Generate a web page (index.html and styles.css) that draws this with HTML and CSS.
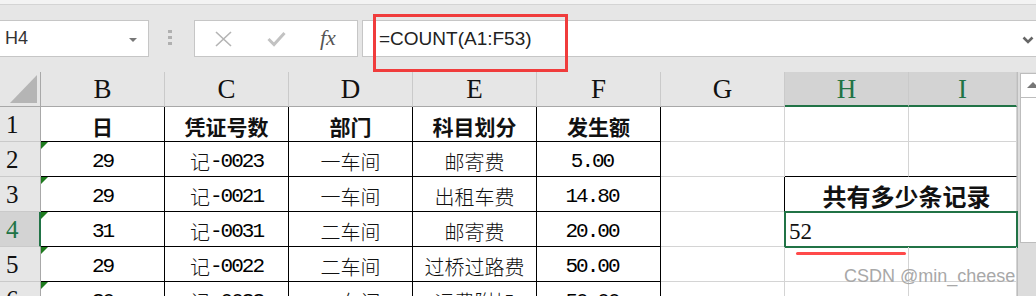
FILE: index.html
```html
<!DOCTYPE html>
<html>
<head>
	<meta charset="utf-8">
	<title>COUNT</title>
	<link rel="stylesheet" href="styles.css">
</head>
<body>
	<div class="app">
		<div class="topline"></div>
		<div class="formula-bar">
			<div class="name-box"><span>H4</span><i class="caret"></i></div>
			<div class="grip"><i></i><i></i><i></i></div>
			<div class="fx-buttons">
				<svg class="btn-x" width="19" height="16" viewBox="0 0 19 16"><path d="M2 1 L17 15 M17 1 L2 15" /></svg>
				<svg class="btn-ok" width="19" height="16" viewBox="0 0 19 16"><path d="M1.5 8 L7 13.5 L17.5 2" /></svg>
				<span class="fx">fx</span>
			</div>
			<div class="formula-input">
				<span class="formula">=COUNT(A1:F53)</span>
				<svg class="chevron" width="12" height="8" viewBox="0 0 12 8"><path d="M1.5 1.5 L6 6 L10.5 1.5" /></svg>
			</div>
		</div>

		<div class="sheet">
			<!-- header -->
			<div class="corner"><svg width="41" height="35" viewBox="0 0 41 35"><polygon points="37,3 37,31 10,31" /></svg></div>
			<div class="hd">B</div>
			<div class="hd">C</div>
			<div class="hd">D</div>
			<div class="hd">E</div>
			<div class="hd">F</div>
			<div class="hd">G</div>
			<div class="hd sel">H</div>
			<div class="hd sel">I</div>
			<div class="scroll">
				<div class="scroll-up"><i></i></div>
				<div class="scroll-thumb"></div>
			</div>

			<!-- row 1 -->
			<div class="rh">1</div>
			<div class="c t bold">日</div>
			<div class="c t bold">凭证号数</div>
			<div class="c t bold">部门</div>
			<div class="c t bold">科目划分</div>
			<div class="c t bold">发生额</div>
			<div class="c"></div>
			<div class="c"></div>
			<div class="c"></div>

			<!-- row 2 -->
			<div class="rh">2</div>
			<div class="c t flag"><span class="num">29</span></div>
			<div class="c t">记<span class="num">-0023</span></div>
			<div class="c t">一车间</div>
			<div class="c t">邮寄费</div>
			<div class="c t money"><span class="num">5.00</span></div>
			<div class="c"></div>
			<div class="c under"></div>
			<div class="c under"></div>

			<!-- row 3 -->
			<div class="rh">3</div>
			<div class="c t flag"><span class="num">29</span></div>
			<div class="c t">记<span class="num">-0021</span></div>
			<div class="c t">一车间</div>
			<div class="c t">出租车费</div>
			<div class="c t money"><span class="num">14.80</span></div>
			<div class="c edge"></div>
			<div class="c wide bold big">共有多少条记录</div>

			<!-- row 4 -->
			<div class="rh sel">4</div>
			<div class="c t flag"><span class="num">31</span></div>
			<div class="c t">记<span class="num">-0031</span></div>
			<div class="c t">二车间</div>
			<div class="c t">邮寄费</div>
			<div class="c t money"><span class="num">20.00</span></div>
			<div class="c"></div>
			<div class="c wide active"><span class="result">52</span></div>

			<!-- row 5 -->
			<div class="rh">5</div>
			<div class="c t flag"><span class="num">29</span></div>
			<div class="c t">记<span class="num">-0022</span></div>
			<div class="c t">二车间</div>
			<div class="c t">过桥过路费</div>
			<div class="c t money"><span class="num">50.00</span></div>
			<div class="c"></div>
			<div class="c"></div>
			<div class="c"></div>

			<!-- row 6 -->
			<div class="rh">6</div>
			<div class="c t flag"><span class="num">30</span></div>
			<div class="c t">记<span class="num">-0033</span></div>
			<div class="c t">二车间</div>
			<div class="c t">运费附加</div>
			<div class="c t money"><span class="num">50.00</span></div>
			<div class="c"></div>
			<div class="c"></div>
			<div class="c"></div>
		</div>

		<!-- annotations -->
		<div class="mark-box"></div>
		<div class="mark-line"></div>
		<div class="watermark">CSDN @min_cheese</div>
	</div>
</body>
</html>
```

FILE: styles.css
```css
/* page */
body {
	margin: 0;
	overflow: hidden;
	font-family: "Liberation Sans", Arial, sans-serif;
	background-color: #e6e6e6;
}

.app {
	position: relative;
	width: 1036px;
	height: 296px;
	overflow: hidden;
}

/* formula bar */
.topline {
	height: 4px;
	background-color: #f3f3f3;
	border-bottom: 1px solid #d4d4d4;
}

.formula-bar {
	display: flex;
	height: 37px;
	padding: 15px 0 15px 0;
}

.name-box {
	display: flex;
	align-items: center;
	box-sizing: border-box;
	width: 149px;
	background-color: #fff;
	border: 1px solid #c6c6c6;
	border-left: 0;
	padding-left: 5px;
	font-size: 18px;
	color: #333;
}

.name-box .caret {
	margin-left: auto;
	margin-right: 11px;
	margin-top: 2px;
	border-left: 4px solid transparent;
	border-right: 4px solid transparent;
	border-top: 4px solid #777;
}

.grip {
	display: flex;
	flex-direction: column;
	gap: 3px;
	width: 4px;
	margin-left: 19px;
	padding-top: 10px;
}

.grip i {
	display: block;
	width: 4px;
	height: 3px;
	background-color: #b0b0b0;
}

.fx-buttons {
	display: flex;
	align-items: center;
	gap: 34px;
	box-sizing: border-box;
	width: 164px;
	margin-left: 22px;
	padding-left: 19px;
	background-color: #fff;
	border: 1px solid #c6c6c6;
}

.btn-x path {
	fill: none;
	stroke: #b4b4b4;
	stroke-width: 1.6;
}

.btn-ok path {
	fill: none;
	stroke: #c2c2c2;
	stroke-width: 3;
}

.fx {
	font-family: "Liberation Serif", serif;
	font-style: italic;
	font-size: 22px;
	color: #555;
	margin-top: -2px;
}

.formula-input {
	display: flex;
	align-items: center;
	flex: 1;
	margin-left: 4px;
	padding-left: 16px;
	background-color: #fff;
	border-top: 1px solid #c6c6c6;
	border-bottom: 1px solid #c6c6c6;
	border-left: 1px solid #c6c6c6;
}

.formula {
	font-size: 19px;
	color: #222;
}

.chevron {
	margin-left: auto;
	margin-right: 2px;
	margin-top: 2px;
}

.chevron path {
	fill: none;
	stroke: #666;
	stroke-width: 2.6;
}

/* sheet */
.sheet {
	display: grid;
	grid-template-columns: 41px repeat(7, 124px) 108px 19px;
	grid-template-rows: repeat(7, 35px);
	background-color: #fff;
}

.corner {
	background-color: #e6e6e6;
	border-right: 1px solid #a8a8a8;
	border-bottom: 1px solid #a8a8a8;
}

.corner svg {
	display: block;
}

.corner polygon {
	fill: #b5b5b5;
}

.hd {
	display: flex;
	justify-content: center;
	align-items: center;
	background-color: #e6e6e6;
	border-right: 1px solid #cacaca;
	border-bottom: 1px solid #a8a8a8;
	font-family: "Liberation Serif", serif;
	font-size: 27px;
	color: #111;
	padding-top: 1px;
}

.hd.sel {
	background-color: #d3d3d3;
	color: #217346;
	border-bottom: 2px solid #217346;
}

.rh {
	display: flex;
	align-items: center;
	padding-left: 6px;
	padding-top: 2px;
	background-color: #e6e6e6;
	border-right: 1px solid #a8a8a8;
	border-bottom: 1px solid #cacaca;
	font-family: "Liberation Serif", serif;
	font-size: 25px;
	color: #111;
}

.rh.sel {
	background-color: #d3d3d3;
	color: #217346;
	border-right: 2px solid #217346;
}

.c {
	position: relative;
	display: flex;
	justify-content: center;
	align-items: center;
	padding-top: 5px;
	border-right: 1px solid #d4d4d4;
	border-bottom: 1px solid #d4d4d4;
	font-family: "Noto Sans CJK SC", sans-serif;
	font-size: 20px;
	font-weight: 300;
	color: #111;
	white-space: nowrap;
}

.c.t {
	border-right-color: #000;
	border-bottom-color: #000;
}

.c.bold {
	font-weight: 700;
	font-size: 21px;
	padding-top: 3px;
}

.c.big {
	font-size: 24px;
	letter-spacing: 0;
	padding-left: 12px;
}

.num {
	font-family: "Liberation Mono", monospace;
	font-size: 21px;
	font-weight: 400;
	letter-spacing: -2px;
	color: #000;
}

.money {
	padding-right: 13px;
}

.c.flag:before {
	content: '';
	position: absolute;
	left: 0;
	top: 0;
	border-top: 7px solid #1e7b1e;
	border-right: 7px solid transparent;
}

.c.under {
	border-bottom-color: #000;
}

.c.edge {
	border-right-color: #000;
}

.c.wide {
	grid-column: span 2;
}

.c.active {
	justify-content: flex-start;
	padding-left: 4px;
	outline: 2px solid #217346;
	outline-offset: -1px;
}

.result {
	font-family: "Liberation Serif", serif;
	font-size: 23px;
	font-weight: 400;
}

/* scrollbar */
.scroll {
	grid-column: 10;
	grid-row: 1 / span 7;
	background-color: #dcdcdc;
	border-left: 1px solid #bdbdbd;
	padding: 1px 0 0 2px;
}

.scroll-up {
	box-sizing: border-box;
	height: 25px;
	background-color: #fff;
	border: 1px solid #bdbdbd;
	border-right: 0;
	padding: 8px 0 0 6px;
}

.scroll-up i {
	display: block;
	width: 0;
	border-left: 6px solid transparent;
	border-right: 6px solid transparent;
	border-bottom: 6px solid #777;
}

.scroll-thumb {
	box-sizing: border-box;
	height: 145px;
	background-color: #fff;
	border: 1px solid #bdbdbd;
	border-top: 0;
	border-right: 0;
}

/* annotations */
.mark-box {
	position: absolute;
	left: 373px;
	top: 14px;
	width: 195px;
	height: 58px;
	box-sizing: border-box;
	border: 3px solid #f03c3c;
}

.mark-line {
	position: absolute;
	left: 796px;
	top: 252px;
	width: 110px;
	height: 3px;
	border-radius: 2px;
	background-color: #ff4a4a;
}

.watermark {
	position: absolute;
	left: 844px;
	top: 266px;
	font-size: 18px;
	color: #a8a8a8;
}
```
